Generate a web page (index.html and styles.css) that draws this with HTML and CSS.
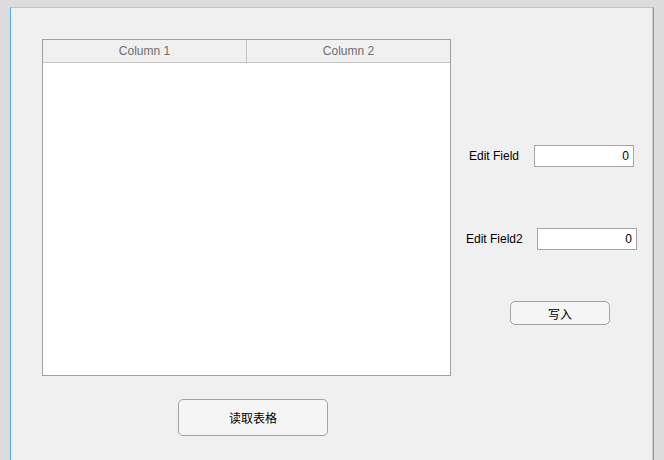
FILE: index.html
```html
<!DOCTYPE html>
<html>
<head>
<meta charset="utf-8">
<link rel="stylesheet" href="styles.css">
</head>
<body>
<div class="window">
  <div class="left">
    <div class="table">
      <div class="thead">
        <div class="th th-first">Column 1</div>
        <div class="th">Column 2</div>
      </div>
    </div>
    <button class="btn btn-read">读取表格</button>
  </div>
  <div class="right">
    <div class="row row1">
      <label class="lbl lbl1">Edit Field</label>
      <div class="field">0</div>
    </div>
    <div class="row row2">
      <label class="lbl lbl2">Edit Field2</label>
      <div class="field">0</div>
    </div>
    <button class="btn btn-write">写入</button>
  </div>
</div>
</body>
</html>
```
FILE: styles.css
```css
html, body {
  margin: 0;
  padding: 0;
  background: #dcdcdc;
  font-family: "Liberation Sans", Arial, "Noto Sans CJK SC", sans-serif;
  font-size: 12px;
  color: #000;
  overflow: hidden;
}
.window {
  margin: 7px 0 0 10px;
  width: 644px;
  height: 460px;
  box-sizing: border-box;
  background: #f0f0f0;
  border-left: 1px solid #4eaef0;
  border-right: 1px solid #4eaef0;
  border-top: 1px solid #a6cbe8;
  box-shadow: inset -1px 0 0 #c9c9c9;
  display: flex;
  align-items: flex-start;
}
.left {
  padding: 31px 0 0 31px;
  display: flex;
  flex-direction: column;
  align-items: flex-start;
}
.table {
  width: 409px;
  height: 337px;
  box-sizing: border-box;
  border: 1px solid #a0a0a0;
  background: #fff;
}
.thead {
  display: flex;
  height: 23px;
  box-sizing: border-box;
  background: #f0f0f0;
  border-bottom: 1px solid #c4c4c4;
}
.th {
  width: 203px;
  line-height: 22px;
  text-align: center;
  color: #6e6e6e;
}
.th-first {
  border-right: 1px solid #c4c4c4;
}
.btn {
  font-family: "Liberation Sans", Arial, "Noto Sans CJK SC", sans-serif;
  font-size: 12px;
  color: #000;
  background: #f5f5f5;
  border: 1px solid #a3a3a3;
  border-radius: 5px;
  box-sizing: border-box;
  padding: 0;
}
.btn-read {
  margin: 23px 0 0 136px;
  width: 150px;
  height: 37px;
}
.right {
  padding-top: 137px;
  display: flex;
  flex-direction: column;
  align-items: flex-start;
}
.row {
  display: flex;
  align-items: center;
  height: 22px;
}
.row1 {
  padding-left: 18px;
}
.row2 {
  margin-top: 61px;
  padding-left: 15px;
}
.lbl1 {
  width: 65px;
}
.lbl2 {
  width: 71px;
}
.field {
  width: 100px;
  height: 22px;
  box-sizing: border-box;
  border: 1px solid #a5a5a5;
  background: #fff;
  text-align: right;
  padding-right: 4px;
  line-height: 20px;
}
.btn-write {
  margin: 51px 0 0 59px;
  width: 100px;
  height: 24px;
}
```
